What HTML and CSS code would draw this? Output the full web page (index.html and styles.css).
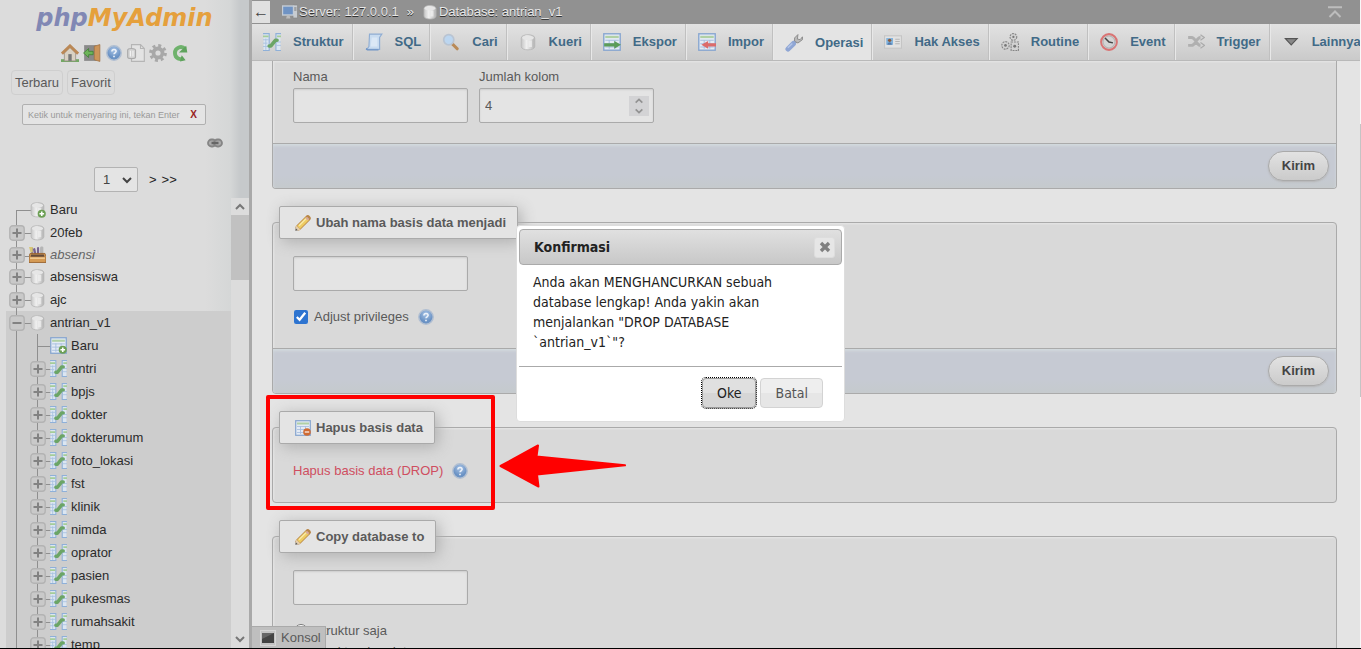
FILE: index.html
```
<!DOCTYPE html>
<html lang="id">
<head>
<meta charset="utf-8">
<title>phpMyAdmin</title>
<link rel="stylesheet" href="styles.css">
</head>
<body>
<svg class="sprite" aria-hidden="true">
  <defs>
    <linearGradient id="g-silver"><stop offset="0" stop-color="#c6c6c6"/><stop offset=".4" stop-color="#f0f0f0"/><stop offset="1" stop-color="#b2b2b2"/></linearGradient>
    <radialGradient id="g-blue" cx=".5" cy=".3"><stop offset="0" stop-color="#a9c4e6"/><stop offset="1" stop-color="#6a92c4"/></radialGradient>
  </defs>
  <symbol id="i-db" viewBox="0 0 16 16"><path d="M2 4.500c0-4 12-4 12 0v7.500c0 4-12 4-12 0z" fill="url(#g-silver)" stroke="#b8b8b8" stroke-width=".8"/><ellipse cx="8" cy="4.300" rx="5.300" ry="2" fill="#e6e6e6"/><path d="M8.500 6.500h3v6h-3z" fill="#f2f2f2" opacity=".7"/></symbol>
  <symbol id="i-plus" viewBox="0 0 16 16"><circle cx="12" cy="12" r="3.800" fill="#6c9f54"/><path d="M12 9.800v4.400M9.800 12h4.400" stroke="#fff" stroke-width="1.500"/></symbol>
  <symbol id="i-table" viewBox="0 0 16 16"><rect x=".7" y=".7" width="14.600" height="14.600" fill="#e4ebf4" stroke="#86a5cf" stroke-width="1.200"/><path d="M2 3.500h12" stroke="#b0d0a5" stroke-width="2"/><path d="M2 6.500h12M2 9.500h12M2 12.500h12M5.500 6v8M10.500 6v8" stroke="#a9c0df" stroke-width=".9"/></symbol>
  <symbol id="i-dbnew" viewBox="0 0 16 16"><use href="#i-db"/><use href="#i-plus"/></symbol>
  <symbol id="i-tablenew" viewBox="0 0 16 16"><use href="#i-table"/><use href="#i-plus"/></symbol>
  <symbol id="i-tabledrop" viewBox="0 0 16 16"><use href="#i-table"/><circle cx="12" cy="12" r="3.800" fill="#cf6a32"/><path d="M9.800 12h4.400" stroke="#f4ddd0" stroke-width="1.500"/></symbol>
  <symbol id="i-struct" viewBox="0 0 16 16"><path d="M.5.500h5v15H.500zM11.500.500h4v15h-4z" fill="#dbe6f2"/><path d="M0 .500h5.500v15H0M16 .500h-4.500v15H16" fill="none" stroke="#8fb0d8"/><path d="M0 3h5M12.500 3H16" stroke="#a5cd98" stroke-width="1.600"/><path d="M0 6h5M0 9h4M0 12h5M12 8h4M12 11h4M2.500 5v10" stroke="#a9c2e0" stroke-width=".8"/><path d="M5.500 11.500h1.500L11 6.500h1.500" fill="none" stroke="#6ba566" stroke-width="3.200" stroke-linecap="round" stroke-linejoin="round"/></symbol>
  <symbol id="i-group" viewBox="0 0 16 16"><path d="M3 7V2.500M6 8l-1-5M8.500 8V2M12 8V2.500" stroke="#76628e" stroke-width="2" stroke-linecap="round"/><path d="M0 1h3.500v5H1.500z" fill="#d7c674"/><path d="M10.500 1.500c0-1.500 3-1.500 3 0V7h-3z" fill="#b5b5b5"/><path d="M1 7h14l1 3v5.500H0V10z" fill="#d59b55" stroke="#96602a" stroke-width=".8"/><path d="M2 8h12l.6 2H1.400z" fill="#644b3a"/><path d="M1 11.500h14" stroke="#efc88e" stroke-width="1.500"/></symbol>
  <symbol id="i-home" viewBox="0 0 16 16"><path d="M0 13.500h16V16H0z" fill="#74a765"/><path d="M3 8l5-5 5 5v7H3z" fill="#d9d1c3" stroke="#979085" stroke-width=".7"/><path d="M6.500 9h3v6h-3z" fill="#777"/><path d="M.8 8.600L8 1.700l7.200 6.900" fill="none" stroke="#ba8856" stroke-width="2.600"/></symbol>
  <symbol id="i-exit" viewBox="0 0 16 16"><path d="M1 1h11v14H1z" fill="#8a8a8a"/><path d="M10 2l5-1.500v15L10 14z" fill="#cc955a" stroke="#9a6a3a" stroke-width=".6"/><path d="M.5 8l4.500-4v2.500h4v3H5V12z" fill="#6cb458" stroke="#3f7f33" stroke-width=".7"/></symbol>
  <symbol id="i-help" viewBox="0 0 16 16"><circle cx="8" cy="8" r="7.200" fill="url(#g-blue)" stroke="#b1bfd2" stroke-width="1.500"/><path d="M5.900 6.500c0-2.700 4.200-2.700 4.200-.2C10.100 7.800 8 7.800 8 9.300M8 10.800v1.500" fill="none" stroke="#eef3fa" stroke-width="1.600"/></symbol>
  <symbol id="i-doc" viewBox="0 0 16 16"><path d="M4 .6h8l3.400 3.400v11.400H4z" fill="#e3e3e3" stroke="#b5b5b5"/><path d="M12 .6V4h3.400" fill="none" stroke="#b5b5b5"/><path d="M.6 5.500c0-2 7-2 7 0v6c0 2-7 2-7 0z" fill="#d2d2d2" stroke="#aaa"/><path d="M3 6v5M5.300 6v5" stroke="#f4f4f4"/></symbol>
  <symbol id="i-gear" viewBox="0 0 16 16"><circle cx="8" cy="8" r="6.500" fill="none" stroke="#a8a8a8" stroke-width="2.800" stroke-dasharray="2.600 2.505"/><circle cx="8" cy="8" r="4" fill="#dcdcdc" stroke="#a8a8a8" stroke-width="3.400"/></symbol>
  <symbol id="i-reload" viewBox="0 0 16 16"><path d="M12.500 4.500C9.500 1 3.500 3 3.500 8s5 6.500 7.500 4.500" fill="none" stroke="#6fb26c" stroke-width="3.400"/><path d="M7 7.500h7.500l-1-6zM8 15.500l5-1-3.500-4.500z" fill="#5fa35d"/></symbol>
  <symbol id="i-chain" viewBox="0 0 16 10"><rect x="1" y="1.500" width="8" height="7" rx="3.500" fill="#aaa" stroke="#858585" stroke-width="1.800"/><rect x="7" y="1.500" width="8" height="7" rx="3.500" fill="#aaa" stroke="#858585" stroke-width="1.800"/><path d="M4.500 5h7" stroke="#666" stroke-width="2.400"/></symbol>
  <symbol id="i-server" viewBox="0 0 16 16"><path d="M11 1h4.500v13H11z" fill="#c8ccd0" stroke="#888" stroke-width=".7"/><path d="M12 4h2.500M12 6h2.500" stroke="#777"/><rect x=".5" y="2" width="11" height="9" fill="#6f93c4" stroke="#c4ccd6" stroke-width="1.400"/><path d="M5 11.500h2.500l1 3H4z" fill="#bbb"/></symbol>
  <symbol id="i-sql" viewBox="0 0 16 16"><path d="M4 1h11l-2 3v10.500H1.500l2-2.500z" fill="#c9dcf0" stroke="#8fadd3"/><path d="M6 4h5v8H5z" fill="#dbe8f6"/><path d="M1.500 13.500c-.5 1 .5 1.500 1.500 1.500h9" fill="none" stroke="#6f94c6" stroke-width="1.200"/></symbol>
  <symbol id="i-search" viewBox="0 0 16 16"><path d="M9.500 10l4 4" stroke="#b98a57" stroke-width="2.800" stroke-linecap="round"/><circle cx="6" cy="6" r="4.500" fill="#bcd6f0" stroke="#b9c4d2" stroke-width="1.500"/></symbol>
  <symbol id="i-export" viewBox="0 0 16 16"><use href="#i-table"/><path d="M1 9h9V7l6 3.500-6 3.500v-2H1z" fill="#5b9c59"/></symbol>
  <symbol id="i-import" viewBox="0 0 16 16"><use href="#i-table"/><path d="M16 9h-7V7l-6 3.500L9 14v-2h7z" fill="#dc6b6b"/></symbol>
  <symbol id="i-wrench" viewBox="0 0 16 16"><path d="M8 8l3-3" stroke="#999" stroke-width="3"/><path d="M11.500.500l-3 3v3l3 1.500 4-3V2.500L13.500 5 11 4.500z" fill="#bbb" stroke="#888" stroke-width=".8"/><path d="M2.700 13.300L7.500 8.500" stroke="#8fa6d4" stroke-width="4.600" stroke-linecap="round"/><path d="M2.500 12.300L6.500 8.500" stroke="#b4c5e8" stroke-width="1.300"/></symbol>
  <symbol id="i-card" viewBox="0 0 16 16"><rect x=".5" y="2.500" width="15" height="11" fill="#e2e2e2" stroke="#c5c5c5"/><path d="M2 4.500h6v6H2z" fill="#80b2dc"/><circle cx="5" cy="6.500" r="1.500" fill="#8c5b3a"/><path d="M3 10.500c0-3 4-3 4 0z" fill="#567aa8"/><path d="M10 5.500h4M10 7.500h4M10 9.500h4" stroke="#b5b5b5"/></symbol>
  <symbol id="i-routine" viewBox="0 0 16 16"><g fill="#d2d2d2" stroke="#858585" stroke-dasharray="1.700 .8"><circle cx="11" cy="3.500" r="3"/><circle cx="4" cy="11" r="3.300"/><path d="M9 8h6.500v7.500H9z"/></g><g fill="#777"><circle cx="11" cy="3.500" r="1"/><circle cx="4" cy="11" r="1.200"/><circle cx="12.200" cy="11.700" r="1.300"/></g></symbol>
  <symbol id="i-clock" viewBox="0 0 16 16"><circle cx="8" cy="8" r="7" fill="#d4d4d4" stroke="#d97474" stroke-width="1.800"/><circle cx="8" cy="8" r="5.300" fill="none" stroke="#b5b5b5" stroke-width=".9"/><path d="M4.500 4.500L8 8l3.500.8" fill="none" stroke="#444" stroke-width="1.300"/></symbol>
  <symbol id="i-trigger" viewBox="0 0 16 16"><path d="M1 4h3c4 0 4 7 8 7h2M1 11h3c4 0 4-7 8-7h2" fill="none" stroke="#b0b0b0" stroke-width="2.600"/><path d="M12 1.500L15.500 4 12 6.500M12 8.500l3.500 2.500-3.500 2.500" fill="#d4d4d4" stroke="#aaa"/></symbol>
  <symbol id="i-more" viewBox="0 0 16 16"><path d="M3 5h10.500L8.200 10.500z" fill="#888" stroke="#555"/></symbol>
  <symbol id="i-pencil" viewBox="0 0 16 16"><path d="M3.500 12.500L12.800 3.200" stroke="#b98646" stroke-width="5.800" stroke-linecap="round"/><path d="M3.500 12.500L12.500 3.500" stroke="#edcb62" stroke-width="4.200"/><path d="M4 10.700L11 3.700" stroke="#f8e9ab" stroke-width="1.300"/><path d="M.5 15.500l.8-5 4.200 4.200z" fill="#e5cfae"/><path d="M.3 15.700l.5-2.500 2 2z" fill="#555"/><path d="M11.300 2.500l2.300 2.300" stroke="#d7a9a0" stroke-width="2"/></symbol>
  <symbol id="i-down" viewBox="0 0 12 12"><path d="M2 4l4 4 4-4" fill="none" stroke="currentColor" stroke-width="2"/></symbol>
  <symbol id="i-up" viewBox="0 0 12 12"><path d="M2 8l4-4 4 4" fill="none" stroke="currentColor" stroke-width="2"/></symbol>
  <symbol id="i-expand" viewBox="0 0 16 16"><rect x=".8" y=".8" width="14.400" height="14.400" rx="3" fill="#c9c9c9" stroke="#b3b3b3" stroke-width="1.400"/><path d="M8 3.500v9M3.500 8h9" stroke="#828282" stroke-width="2"/></symbol>
  <symbol id="i-collapse" viewBox="0 0 16 16"><rect x=".8" y=".8" width="14.400" height="14.400" rx="3" fill="#c9c9c9" stroke="#b3b3b3" stroke-width="1.400"/><path d="M3.500 8h9" stroke="#828282" stroke-width="2"/></symbol>
</svg>

<aside class="sidebar">
  <header class="side-head">
    <a class="logo" href="#"><span class="logo-php">php</span><span class="logo-my">MyAdmin</span></a>
    <nav class="quick" aria-label="Pintasan">
      <a href="#" aria-label="Beranda"><svg><use href="#i-home"/></svg></a>
      <a href="#" aria-label="Keluar"><svg><use href="#i-exit"/></svg></a>
      <a href="#" aria-label="Bantuan"><svg><use href="#i-help"/></svg></a>
      <a href="#" aria-label="Dokumentasi"><svg><use href="#i-doc"/></svg></a>
      <a href="#" aria-label="Pengaturan"><svg><use href="#i-gear"/></svg></a>
      <a href="#" aria-label="Muat ulang"><svg><use href="#i-reload"/></svg></a>
    </nav>
    <div class="recent"><button type="button">Terbaru</button><button type="button">Favorit</button></div>
    <div class="filter">
      <input type="text" aria-label="Saring" placeholder="Ketik untuk menyaring ini, tekan Enter">
      <button type="button" aria-label="Hapus saringan">X</button>
    </div>
    <button class="chain" type="button" aria-label="Tautkan panel"><svg><use href="#i-chain"/></svg></button>
    <div class="pager">
      <span class="picker"><select aria-label="Halaman"><option>1</option></select><svg><use href="#i-down"/></svg></span>
      <a href="#">&gt;</a><a href="#">&gt;&gt;</a>
    </div>
  </header>
  <div class="tree-wrap">
    <ul class="tree">
      <li><div class="node first"><span class="gap"></span><svg><use href="#i-dbnew"/></svg><a href="#">Baru</a></div></li>
      <li><div class="node"><button type="button" aria-label="Buka"><svg><use href="#i-expand"/></svg></button><svg><use href="#i-db"/></svg><a href="#">20feb</a></div></li>
      <li><div class="node grouped"><button type="button" aria-label="Buka"><svg><use href="#i-expand"/></svg></button><svg><use href="#i-group"/></svg><a href="#">absensi</a></div></li>
      <li><div class="node"><button type="button" aria-label="Buka"><svg><use href="#i-expand"/></svg></button><svg><use href="#i-db"/></svg><a href="#">absensiswa</a></div></li>
      <li><div class="node"><button type="button" aria-label="Buka"><svg><use href="#i-expand"/></svg></button><svg><use href="#i-db"/></svg><a href="#">ajc</a></div></li>
      <li class="selected"><div class="node"><button type="button" aria-label="Tutup"><svg><use href="#i-collapse"/></svg></button><svg><use href="#i-db"/></svg><a href="#">antrian_v1</a></div>
        <ul class="subtree">
          <li><div class="node"><span class="gap"></span><svg><use href="#i-tablenew"/></svg><a href="#">Baru</a></div></li>
          <li><div class="node"><button type="button" aria-label="Buka"><svg><use href="#i-expand"/></svg></button><svg><use href="#i-struct"/></svg><a href="#">antri</a></div></li>
          <li><div class="node"><button type="button" aria-label="Buka"><svg><use href="#i-expand"/></svg></button><svg><use href="#i-struct"/></svg><a href="#">bpjs</a></div></li>
          <li><div class="node"><button type="button" aria-label="Buka"><svg><use href="#i-expand"/></svg></button><svg><use href="#i-struct"/></svg><a href="#">dokter</a></div></li>
          <li><div class="node"><button type="button" aria-label="Buka"><svg><use href="#i-expand"/></svg></button><svg><use href="#i-struct"/></svg><a href="#">dokterumum</a></div></li>
          <li><div class="node"><button type="button" aria-label="Buka"><svg><use href="#i-expand"/></svg></button><svg><use href="#i-struct"/></svg><a href="#">foto_lokasi</a></div></li>
          <li><div class="node"><button type="button" aria-label="Buka"><svg><use href="#i-expand"/></svg></button><svg><use href="#i-struct"/></svg><a href="#">fst</a></div></li>
          <li><div class="node"><button type="button" aria-label="Buka"><svg><use href="#i-expand"/></svg></button><svg><use href="#i-struct"/></svg><a href="#">klinik</a></div></li>
          <li><div class="node"><button type="button" aria-label="Buka"><svg><use href="#i-expand"/></svg></button><svg><use href="#i-struct"/></svg><a href="#">nimda</a></div></li>
          <li><div class="node"><button type="button" aria-label="Buka"><svg><use href="#i-expand"/></svg></button><svg><use href="#i-struct"/></svg><a href="#">oprator</a></div></li>
          <li><div class="node"><button type="button" aria-label="Buka"><svg><use href="#i-expand"/></svg></button><svg><use href="#i-struct"/></svg><a href="#">pasien</a></div></li>
          <li><div class="node"><button type="button" aria-label="Buka"><svg><use href="#i-expand"/></svg></button><svg><use href="#i-struct"/></svg><a href="#">pukesmas</a></div></li>
          <li><div class="node"><button type="button" aria-label="Buka"><svg><use href="#i-expand"/></svg></button><svg><use href="#i-struct"/></svg><a href="#">rumahsakit</a></div></li>
          <li><div class="node"><button type="button" aria-label="Buka"><svg><use href="#i-expand"/></svg></button><svg><use href="#i-struct"/></svg><a href="#">temp</a></div></li>
        </ul>
      </li>
    </ul>
    <div class="scrollbar" aria-hidden="true">
      <svg><use href="#i-up"/></svg><span class="thumb"></span><svg><use href="#i-down"/></svg>
    </div>
  </div>
</aside>

<main class="main">
  <div class="crumbs">
    <button class="hide-nav" type="button">←</button>
    <a href="#"><svg><use href="#i-server"/></svg>Server: 127.0.0.1</a>
    <span>»</span>
    <a href="#"><svg><use href="#i-db"/></svg>Database: antrian_v1</a>
    <button class="to-top" type="button" aria-label="Ke atas"><svg viewBox="0 0 14 12"><path d="M0 1.200h14M1.500 11L7 5.500l5.500 5.500" fill="none" stroke="currentColor" stroke-width="2"/></svg></button>
  </div>
  <nav class="tabs" aria-label="Menu basis data">
    <a href="#"><svg><use href="#i-struct"/></svg>Struktur</a>
    <a href="#"><svg><use href="#i-sql"/></svg>SQL</a>
    <a href="#"><svg><use href="#i-search"/></svg>Cari</a>
    <a href="#"><svg><use href="#i-db"/></svg>Kueri</a>
    <a href="#"><svg><use href="#i-export"/></svg>Ekspor</a>
    <a href="#"><svg><use href="#i-import"/></svg>Impor</a>
    <a href="#" class="active" aria-current="page"><svg><use href="#i-wrench"/></svg>Operasi</a>
    <a href="#"><svg><use href="#i-card"/></svg>Hak Akses</a>
    <a href="#"><svg><use href="#i-routine"/></svg>Routine</a>
    <a href="#"><svg><use href="#i-clock"/></svg>Event</a>
    <a href="#"><svg><use href="#i-trigger"/></svg>Trigger</a>
    <a href="#"><svg><use href="#i-more"/></svg>Lainnya</a>
  </nav>
  <div class="content">
    <form class="panel continued">
      <div class="panel-body fields">
        <div class="field"><label for="nama">Nama</label><input id="nama" type="text"></div>
        <div class="field"><label for="kolom">Jumlah kolom</label>
          <span class="number"><input id="kolom" type="number" value="4"><span class="spin" aria-hidden="true"><svg><use href="#i-up"/></svg><svg><use href="#i-down"/></svg></span></span></div>
      </div>
      <div class="panel-foot"><button type="button">Kirim</button></div>
    </form>
    <form><fieldset class="panel">
      <legend><svg><use href="#i-pencil"/></svg>Ubah nama basis data menjadi</legend>
      <div class="panel-body">
        <input type="text" aria-label="Nama basis data baru">
        <div class="option"><input id="adjust" type="checkbox" checked><label for="adjust">Adjust privileges</label><a class="help" href="#" aria-label="Bantuan"><svg><use href="#i-help"/></svg></a></div>
      </div>
      <div class="panel-foot"><button type="button">Kirim</button></div>
    </fieldset></form>
    <div class="marked">
      <fieldset class="panel">
        <legend><svg><use href="#i-tabledrop"/></svg>Hapus basis data</legend>
        <div class="panel-body drop"><a class="danger" href="#">Hapus basis data (DROP)</a><a class="help" href="#" aria-label="Bantuan"><svg><use href="#i-help"/></svg></a></div>
      </fieldset>
      <span class="mark-box"></span>
      <svg class="mark-arrow" viewBox="0 0 128 44"><path d="M1.500 22L39 1.500l-1.500 11L126 21.300 38 30.500l1.500 12z" fill="#f00" stroke="#f00" stroke-width="2" stroke-linejoin="round"/></svg>
    </div>
    <form><fieldset class="panel">
      <legend><svg><use href="#i-pencil"/></svg>Copy database to</legend>
      <div class="panel-body">
        <input type="text" aria-label="Nama basis data salinan">
        <div class="option"><input id="s1" name="what" type="radio"><label for="s1">Struktur saja</label></div>
        <div class="option"><input id="s2" name="what" type="radio" checked><label for="s2">Struktur dan data</label></div>
      </div>
      <div class="panel-foot"><button type="button">Kirim</button></div>
    </fieldset></form>
  </div>
  <button class="console" type="button"><svg viewBox="0 0 16 16"><rect x=".5" y=".5" width="15" height="15" fill="#c4c4c4" stroke="#d6d6d6"/><path d="M2 3h12v10H2z" fill="#444"/><path d="M2 3h12L2 9z" fill="#666"/></svg>Konsol</button>
</main>
<div class="page-scroll" aria-hidden="true"></div>

<div class="overlay">
  <section class="dialog" role="dialog" aria-labelledby="dlg-title">
    <header><h2 id="dlg-title">Konfirmasi</h2><button type="button" aria-label="Tutup"><svg viewBox="0 0 12 12"><path d="M2 2l8 8M10 2l-8 8" stroke="#808080" stroke-width="3.400"/></svg></button></header>
    <p>Anda akan MENGHANCURKAN sebuah database lengkap! Anda yakin akan menjalankan "DROP DATABASE `antrian_v1`"?</p>
    <footer><button class="focused" type="button">Oke</button><button type="button">Batal</button></footer>
  </section>
</div>
</body>
</html>
```
FILE: styles.css
```
* { box-sizing: border-box; }

body {
  margin: 0;
  display: flex;
  height: 100vh;
  overflow: hidden;
  border-bottom: 1px solid #000;
  background: #e4e4e4;
  color: #5a5a5a;
  font: 13px/20px "Liberation Sans", Arial, sans-serif;
}

a { color: inherit; text-decoration: none; }
button, input, select { font: inherit; color: inherit; margin: 0; }
button { padding: 0; border: 0; background: none; }
svg { display: block; width: 16px; height: 16px; flex: none; }
.sprite { position: absolute; width: 0; height: 0; }

/* Navigation panel */
.sidebar {
  display: flex;
  flex-direction: column;
  flex: none;
  width: 252px;
  border-right: 3px solid #a9a9a9;
  background: linear-gradient(to right, #dcdcdc 205px, #d5d7d7 230px, #c6c9cb 240px, #c6c9cb 249px);
}
.side-head { display: flex; flex-direction: column; flex: none; }
.logo {
  align-self: center;
  height: 36px;
  font: italic bold 24px/36px "DejaVu Sans", Verdana, sans-serif;
}
.logo-php { color: #8188b4; }
.logo-my { color: #e5a03c; }
.quick { display: flex; justify-content: center; gap: 4px; margin: 8px 0; }
.quick svg { width: 18px; height: 18px; }
.quick a:nth-child(3) svg { width: 16px; margin: 0 1px; }
.recent { display: flex; gap: 4px; margin-left: 11px; }
.recent button {
  height: 25px;
  padding: 0 3px;
  border: 1px solid #cfcfcf;
  border-radius: 4px;
}
.filter {
  display: flex;
  align-items: center;
  margin: 9px 43px 0 22px;
  height: 21px;
  padding: 0 8px 0 5px;
  border: 1px solid #b0b0b0;
  border-radius: 2px;
  background: #e4e4e4;
}
.filter input {
  flex: 1;
  min-width: 0;
  padding: 0;
  border: 0;
  background: none;
  font-size: 9px;
}
.filter input::placeholder { color: #999; }
.filter button { color: #982222; font-size: 10px; font-weight: bold; }
.chain { align-self: flex-end; margin: 13px 26px 0 0; }
.chain svg { height: 10px; }
.pager {
  display: flex;
  align-items: center;
  gap: 5px;
  margin: 19px 0 6px 94px;
  color: #222;
}
.picker, .number { display: grid; align-items: center; }
.picker { margin-right: 6px; color: #444; }
.picker > *, .number > * { grid-area: 1 / 1; }
.picker select {
  appearance: none;
  width: 44px;
  height: 25px;
  padding: 0 8px;
  border: 1px solid #b3b3b3;
  border-radius: 2px;
  background: #e4e4e4;
}
.picker svg { width: 12px; height: 12px; justify-self: end; margin-right: 5px; pointer-events: none; }

.tree-wrap { display: flex; flex: 1; min-height: 0; }
.tree, .subtree { margin: 0; padding: 0; list-style: none; }
.tree { flex: 1; padding-left: 6px; overflow: hidden; color: #2b2b2b; }
.node {
  display: flex;
  align-items: center;
  gap: 4px;
  height: 23px;
  padding-left: 3px;
  background:
    linear-gradient(#8f8f8f, #8f8f8f) 10px 0 / 1px 100% no-repeat,
    linear-gradient(#8f8f8f, #8f8f8f) 10px 12px / 16px 1px no-repeat;
}
.node.first { background-position: 10px 12px, 10px 12px; }
.node button svg, .gap { width: 16px; height: 16px; }
.node > svg { width: 17px; height: 17px; }
.node.grouped { height: 21px; font-style: italic; color: #666; }
.selected { background: #cdcdcd; }
.subtree .node {
  padding-left: 24px;
  background:
    linear-gradient(#8f8f8f, #8f8f8f) 10px 0 / 1px 100% no-repeat,
    linear-gradient(#8f8f8f, #8f8f8f) 31px 0 / 1px 100% no-repeat,
    linear-gradient(#8f8f8f, #8f8f8f) 31px 12px / 16px 1px no-repeat;
}
.scrollbar {
  display: flex;
  flex-direction: column;
  align-items: center;
  width: 18px;
  padding: 3px 0;
  background: #dcdcdc;
  color: #777;
}
.scrollbar svg { width: 12px; height: 12px; }
.thumb { width: 100%; height: 65px; margin: 2px 0 auto; background: #c1c1c1; }

/* Work area */
.main { position: relative; display: flex; flex-direction: column; flex: 1; min-width: 0; }
.crumbs {
  display: flex;
  align-items: center;
  gap: 8px;
  flex: none;
  height: 24px;
  background: #919191;
  color: #e8e8e8;
  text-shadow: 0 1px 0 #333;
}
.crumbs a { display: flex; align-items: center; gap: 1px; }
.hide-nav { width: 18px; height: 22px; margin-right: 4px; background: #e0e0e0; color: #444; font-size: 16px; text-shadow: none; }
.to-top { margin: 0 18px 0 auto; color: #bdbdbd; }
.to-top svg { width: 14px; height: 12px; }
.tabs {
  display: flex;
  flex: none;
  height: 37px;
  overflow: hidden;
  border-bottom: 1px solid #b9b9b9;
  background: linear-gradient(#e2e2e2, #cacaca);
  color: #416a87;
  font-weight: bold;
}
.tabs a {
  display: flex;
  align-items: center;
  flex: none;
  gap: 12px;
  padding: 0 8px 0 11px;
  border-left: 1px solid #e8e8e8;
  border-right: 1px solid #c0c0c0;
}
.tabs a:first-child { border-left: 0; }
.tabs svg { width: 18px; height: 18px; }
.tabs .active { height: 37px; background: #e4e4e4; }
.content {
  flex: 1;
  min-height: 0;
  overflow: hidden;
  padding: 0 23px 0 20px;
  display: flex;
  flex-direction: column;
  gap: 17px;
}
.content > * { flex: none; }
.panel {
  min-width: 0;
  margin: 0;
  padding: 0;
  border: 1px solid #aaa;
  border-radius: 4px;
  background: #d9d9d9;
  box-shadow: inset 1px 1px 2px #e6e6e6;
}
.continued { border-top: 0; border-radius: 0 0 4px 4px; }
legend {
  display: flex;
  align-items: center;
  gap: 5px;
  height: 33px;
  margin-left: 6px;
  padding: 0 11px 0 15px;
  border: 1px solid #aaa;
  border-radius: 2px;
  background: #e4e4e4;
  box-shadow: 3px 3px 15px #b0b0b0;
  font-weight: bold;
}
.panel-body { display: flex; flex-direction: column; align-items: flex-start; padding: 17px 20px 22px; }
.fields { flex-direction: row; gap: 11px; padding: 6px 20px 20px; }
.field { display: flex; flex-direction: column; gap: 1px; }
.panel input[type="text"], .panel input[type="number"] {
  width: 175px;
  height: 35px;
  padding: 0 5px;
  border: 1px solid #aaa;
  border-radius: 2px;
  background: #e4e4e4;
  box-shadow: inset 0 1px 2px #ccc;
}
.number input { appearance: textfield; }
.number input::-webkit-inner-spin-button { display: none; }
.spin {
  display: flex;
  flex-direction: column;
  align-items: center;
  justify-content: space-between;
  justify-self: end;
  width: 20px;
  height: 20px;
  margin-right: 5px;
  background: #d3d3d5;
  color: #929292;
  pointer-events: none;
}
.spin svg { width: 10px; height: 10px; }
.option { display: flex; align-items: center; height: 18px; margin-top: 3px; }
.panel-body > input + .option { margin-top: 17px; }
.option input { width: 14px; height: 14px; margin: 0 6px 0 1px; accent-color: #2e74d0; }
.help { margin-left: 9px; }
.drop { flex-direction: row; align-items: center; padding-bottom: 21px; }
.danger { color: #cf4e60; }
.panel-foot {
  display: flex;
  justify-content: flex-end;
  padding: 7px;
  border-top: 1px solid #aaa;
  border-radius: 0 0 3px 3px;
  background: linear-gradient(#c6cad3 70%, #c5cacd);
  box-shadow: inset 0 2px 3px #d3dade;
}
.panel-foot button {
  height: 30px;
  padding: 0 13px;
  border: 1px solid #aaa;
  border-radius: 15px;
  background: linear-gradient(#e2e2e2, #cbcbcb);
  box-shadow: 0 1px 2px #b5b5b5;
  color: #444;
  font-weight: bold;
}

/* Highlight drawn over the drop section */
.marked { position: relative; }
.mark-box {
  position: absolute;
  left: -6px;
  top: -16px;
  width: 229px;
  height: 115px;
  border: 4px solid #f00;
  border-radius: 2px;
  pointer-events: none;
}
.mark-arrow { position: absolute; left: 227px; top: 33px; width: 128px; height: 44px; }

.console {
  position: absolute;
  left: 0;
  bottom: 0;
  display: flex;
  align-items: center;
  gap: 5px;
  height: 22px;
  padding: 0 4px 0 8px;
  border: solid #aaa;
  border-width: 1px 1px 0 0;
  background: #bfbfbf;
}
.page-scroll { flex: none; width: 1px; background: linear-gradient(#f8f8f8 124px, #c4c4c4 124px, #c4c4c4 397px, #f8f8f8 397px); }

/* Confirmation dialog */
.overlay { position: fixed; inset: 0 0 2px; display: grid; place-items: center; }
.dialog {
  width: 329px;
  padding: 3px 2px;
  border: 1px solid #ddd;
  border-radius: 4px;
  background: #fff;
  color: #222;
  font: 14px/20px "DejaVu Sans Condensed", Tahoma, Verdana, sans-serif;
}
.dialog header {
  display: flex;
  align-items: center;
  justify-content: space-between;
  height: 36px;
  padding: 0 6px 0 14px;
  border: 1px solid #aaa;
  border-radius: 4px;
  background: linear-gradient(#e0e0e0, #c8c8c8);
}
.dialog h2 { margin: 0; font-size: 14px; line-height: 20px; }
.dialog header button {
  display: grid;
  place-items: center;
  width: 21px;
  height: 21px;
  border: 1px solid #ddd;
  border-radius: 3px;
  background: #e6e6e6;
}
.dialog header svg { width: 12px; height: 12px; }
.dialog p { margin: 0; padding: 7px 24px 14px 14px; }
.dialog footer {
  display: flex;
  justify-content: flex-end;
  gap: 4px;
  padding: 11px 19px 10px;
  border-top: 1px solid #aaa;
}
.dialog footer button {
  height: 30px;
  padding: 0 14px;
  border: 1px solid #d3d3d3;
  border-radius: 4px;
  background: linear-gradient(#eee 50%, #e6e6e6 50%);
  color: #555;
}
.dialog footer .focused {
  border-color: #999;
  outline: 1px dotted #000;
  background: linear-gradient(#e0e0e0 50%, #d6d6d6 50%);
  color: #212121;
}
```
